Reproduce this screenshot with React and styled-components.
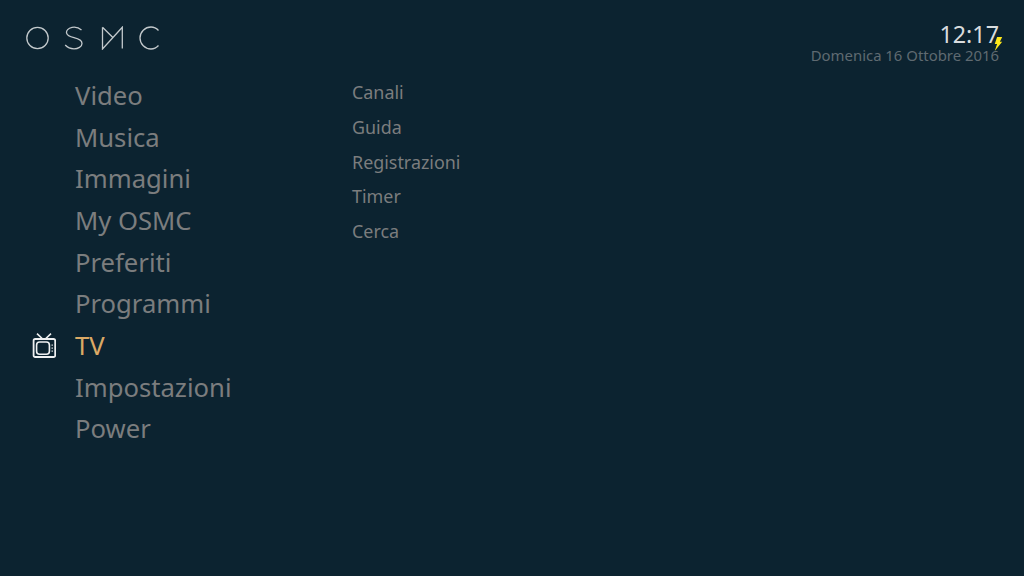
import React from "react";
import styled, { createGlobalStyle } from "styled-components";

const Global = createGlobalStyle`
  html, body { margin: 0; padding: 0; background: #0c2330; }
  body { font-family: "Noto Sans", sans-serif; }
`;

const Screen = styled.div`
  width: 1024px;
  height: 576px;
  overflow: hidden;
  background: #0c2330;
  display: flex;
  flex-direction: column;
`;

const Header = styled.header`
  height: 74.85px;
  display: flex;
  justify-content: space-between;
  align-items: flex-start;
  padding: 0 25px 0 26px;
`;

const Logo = styled.svg`
  display: block;
  margin-top: 26px;
`;

const Clock = styled.div`
  position: relative;
  display: flex;
  flex-direction: column;
  align-items: flex-end;
  padding-top: 19px;
`;

const Time = styled.div`
  font-size: 23.3px;
  line-height: 30px;
  color: #d9dcde;
`;

const DateLine = styled.div`
  font-size: 14.9px;
  line-height: 20px;
  margin-top: -4px;
  color: #5f6a71;
`;

const Bolt = styled.svg`
  position: absolute;
  right: -4px;
  top: 37px;
`;

const Body = styled.main`
  display: flex;
  align-items: flex-start;
`;

const MainMenu = styled.ul`
  list-style: none;
  margin: 0;
  padding: 0 0 0 32px;
  width: 352px;
  box-sizing: border-box;
`;

const MainItem = styled.li`
  height: 41.65px;
  display: flex;
  align-items: center;
  font-size: 25.65px;
  color: ${(p) => (p.$active ? "#dba965" : "#7b7d7e")};
`;

const IconSlot = styled.span`
  width: 43px;
  display: flex;
  align-items: center;
  flex: none;
`;

const SubMenu = styled.ul`
  list-style: none;
  margin: 0;
  padding: 0;
`;

const SubItem = styled.li`
  height: 34.7px;
  display: flex;
  align-items: center;
  font-size: 17.9px;
  color: #7b7d7e;
`;

const TvIcon = () => (
  <svg width="24" height="25" viewBox="0 0 24 25" fill="none" stroke="#eef0f1">
    <path d="M5 0.6 L11.2 6.5 M19 0.6 L12.8 6.5" strokeWidth="1.6" />
    <rect x="1.6" y="6" width="21.6" height="18" rx="1.6" strokeWidth="1.8" />
    <rect x="4.6" y="9" width="12.8" height="12.2" rx="3" strokeWidth="1.6" />
    <path d="M20.2 11.5v1.2M20.2 14.5v1.2M20.2 17.5v1.2" strokeWidth="1.3" />
  </svg>
);

const main = ["Video", "Musica", "Immagini", "My OSMC", "Preferiti", "Programmi", "TV", "Impostazioni", "Power"];
const sub = ["Canali", "Guida", "Registrazioni", "Timer", "Cerca"];

export default function App() {
  return (
    <Screen>
      <Global />
      <Header>
        <Logo width="134" height="24" viewBox="0 0 134 24" fill="none" stroke="#c3c9cc" strokeWidth="1.3">
          <circle cx="11.5" cy="12" r="10.7" />
          <path d="M55.5 4C53 1.8 49.5 0.8 46 1.4C42.2 2.1 40 4.6 40.6 7.2C41.2 9.8 44.4 10.8 48 11.6C52.4 12.6 56 14 56 17.4C56 20.8 52 22.8 48 22.8C44.6 22.8 41.4 21.4 39.2 19" />
          <path d="M76.5 1.2V23L96.3 1.2V22.5M76.5 1.2L87.4 12" />
          <path d="M132.5 4.5C130.4 2.2 127.8 1 125 1C119 1 114 6 114 12C114 18 119 23 125 23C127.8 23 130.4 21.8 132.5 19.5" />
        </Logo>
        <Clock>
          <Time>12:17</Time>
          <DateLine>Domenica 16 Ottobre 2016</DateLine>
          <Bolt width="10" height="14" viewBox="0 0 10 15">
            <path d="M4 0H9.5L7 5H9.5L1.5 15L4 7.5H1.5Z" fill="#ffe81a" />
          </Bolt>
        </Clock>
      </Header>
      <Body>
        <MainMenu>
          {main.map((m) => (
            <MainItem key={m} $active={m === "TV"}>
              <IconSlot>{m === "TV" && <TvIcon />}</IconSlot>
              {m}
            </MainItem>
          ))}
        </MainMenu>
        <SubMenu>
          {sub.map((s) => (
            <SubItem key={s}>{s}</SubItem>
          ))}
        </SubMenu>
      </Body>
    </Screen>
  );
}
